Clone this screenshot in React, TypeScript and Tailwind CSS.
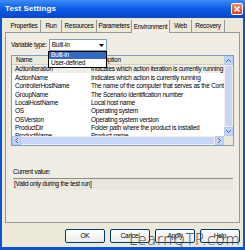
import React from "react";

const rows: [string, string][] = [
  ["ActionIteration", "Indicates which action iteration is currently running"],
  ["ActionName", "Indicates which action is currently running"],
  ["ControllerHostName", "The name of the computer that serves as the Controller"],
  ["GroupName", "The Scenario identification number"],
  ["LocalHostName", "Local host name"],
  ["OS", "Operating system"],
  ["OSVersion", "Operating system version"],
  ["ProductDir", "Folder path where the product is installed"],
  ["ProductName", "Product name"],
];

const tabs: [string, string][] = [
  ["Properties", "w-[33px]"],
  ["Run", "w-[21px]"],
  ["Resources", "w-[35px]"],
  ["Parameters", "w-[35px]"],
  ["Environment", "w-[38px]"],
  ["Web", "w-[22px]"],
  ["Recovery", "w-[33px]"],
];

const btn =
  "w-[40px] h-[14px] border border-[#003c74] rounded-[2px] bg-gradient-to-b from-[#ffffff] to-[#ecebe6] flex items-center justify-center";

export default function App() {
  return (
    <div
      className="relative w-[245px] h-[250px] overflow-hidden bg-[#0c54d6] flex flex-col text-[6.5px] tracking-[-0.25px] text-black"
      style={{ fontFamily: "'Liberation Sans', Arial, sans-serif" }}
    >
      {/* Title bar */}
      <div className="h-[18px] shrink-0 flex items-center justify-between pl-[5px] pr-[2px] bg-gradient-to-b from-[#3d8cf5] via-[#0a5ae6] to-[#0846c4]">
        <span className="text-white font-bold text-[8px] tracking-[0.1px]">Test Settings</span>
        <div className="w-[12px] h-[12px] rounded-[2px] border border-white bg-gradient-to-b from-[#f0896a] to-[#d2431c] flex items-center justify-center">
          <svg width="8" height="8" viewBox="0 0 8 8">
            <path d="M1.5 1.5 L6.5 6.5 M6.5 1.5 L1.5 6.5" stroke="white" strokeWidth="1.6" />
          </svg>
        </div>
      </div>
      {/* Body */}
      <div className="flex-1 mx-[2px] mb-[3px] bg-[#ece9d8] flex flex-col">
        {/* Tabs */}
        <div className="flex items-end pl-[6px] pt-[4px] h-[14px] shrink-0">
          {tabs.map(([t, w]) => (
            <div
              key={t}
              className={
                w +
                (t === "Environment"
                  ? " h-[13px] flex items-center justify-center bg-[#f0eee4] -mb-[1px] z-10 border-r border-[#919b9c]"
                  : " h-[12px] flex items-center justify-center border-r border-[#919b9c] bg-[#ece9d8]")
              }
            >
              {t}
            </div>
          ))}
        </div>
        {/* Panel */}
        <div className="mx-[3px] h-[191px] border border-[#919b9c] bg-[#efede3] flex flex-col px-[5px] pt-[6px]">
          <div className="flex items-center h-[12px] relative">
            <span className="mr-[2px]">Variable type:</span>
            <div className="w-[58px] h-[12px] bg-white border border-[#7f9db9] flex items-center justify-between pl-[2px]">
              <span>Built-in</span>
              <div className="w-[8px] h-full flex items-center justify-center">
                <svg width="5" height="3" viewBox="0 0 5 3">
                  <path d="M0 0 L5 0 L2.5 3 Z" fill="black" />
                </svg>
              </div>
            </div>
            {/* dropdown overlay */}
            <div className="absolute left-[37px] top-[12px] w-[59px] bg-white border border-black z-20">
              <div className="h-[7px] bg-[#316ac5] text-white flex items-center pl-[2px] leading-none">Built-in</div>
              <div className="h-[8px] flex items-center pl-[2px] leading-none">User-defined</div>
            </div>
          </div>
          {/* List view */}
          <div className="mt-[4px] h-[91px] border border-[#7f9db9] bg-white flex flex-col overflow-hidden">
            <div className="flex-1 flex min-h-0">
              <div className="flex-1 flex flex-col min-w-0 overflow-hidden">
                <div className="h-[9px] shrink-0 flex bg-[#ebeadb] border-b border-[#d6d2c2]">
                  <div className="w-[76px] shrink-0 pl-[4px] border-r border-[#c7c5b2] flex items-center">Name</div>
                  <div className="flex-1 pl-[3px] flex items-center">Description</div>
                </div>
                {rows.map(([n, d], i) => (
                  <div
                    key={n}
                    className={"h-[8.4px] shrink-0 flex items-center whitespace-nowrap " + (i === 0 ? "bg-[#eeede8]" : "")}
                  >
                    <div className="w-[76px] pl-[3px] shrink-0">{n}</div>
                    <div className="pl-[3px]">{d}</div>
                  </div>
                ))}
              </div>
              {/* vertical scrollbar */}
              <div className="w-[9px] shrink-0 bg-[#f3f1ea] flex flex-col">
                <div className="h-[9px] bg-[#c3d3fd] border border-[#b5c9f5] flex items-center justify-center">
                  <svg width="5" height="3" viewBox="0 0 5 3">
                    <path d="M0 3 L2.5 0.5 L5 3" stroke="#4d6185" strokeWidth="1" fill="none" />
                  </svg>
                </div>
                <div className="flex-1 bg-[#c8d6fb] mx-[1px] my-[1px]" />
                <div className="h-[9px] bg-[#c3d3fd] border border-[#b5c9f5] flex items-center justify-center">
                  <svg width="5" height="3" viewBox="0 0 5 3">
                    <path d="M0 0 L2.5 2.5 L5 0" stroke="#4d6185" strokeWidth="1" fill="none" />
                  </svg>
                </div>
              </div>
            </div>
            {/* horizontal scrollbar */}
            <div className="h-[9px] shrink-0 flex bg-[#f3f1ea]">
              <div className="w-[9px] bg-[#c3d3fd] border border-[#b5c9f5] flex items-center justify-center">
                <svg width="3" height="5" viewBox="0 0 3 5">
                  <path d="M3 0 L0.5 2.5 L3 5" stroke="#4d6185" strokeWidth="1" fill="none" />
                </svg>
              </div>
              <div className="flex-1 flex py-[1px] pr-[1px]">
                <div className="flex-1 bg-[#c8d6fb]" />
              </div>
              <div className="w-[9px] bg-[#c3d3fd] border border-[#b5c9f5] flex items-center justify-center">
                <svg width="3" height="5" viewBox="0 0 3 5">
                  <path d="M0 0 L2.5 2.5 L0 5" stroke="#4d6185" strokeWidth="1" fill="none" />
                </svg>
              </div>
              <div className="w-[9px] bg-[#ece9d8]" />
            </div>
          </div>
          {/* Current value */}
          <div className="mt-[21px] ml-[2px]">Current value:</div>
          <div className="mt-[1px] ml-[2px] mr-[1px] h-[12px] border-t border-[#8f8e85] bg-[#e9e7dd] pl-[1px] flex items-center">
            [Valid only during the test run]
          </div>
        </div>
        {/* Buttons */}
        <div className="flex items-center pt-[6px] pl-[63px] gap-[5px]">
          <div className={btn}>OK</div>
          <div className={btn}>Cancel</div>
          <div className={btn}>Apply</div>
          <div className={btn}>Help</div>
        </div>
      </div>
      {/* watermark */}
      <div
        className="absolute left-[129px] top-[233px] text-[15px] text-[#444] leading-none tracking-[0.4px] pointer-events-none"
        style={{ fontFamily: "'DejaVu Sans', sans-serif", fontWeight: 200 }}
      >
        LearnQTP.com
      </div>
    </div>
  );
}
